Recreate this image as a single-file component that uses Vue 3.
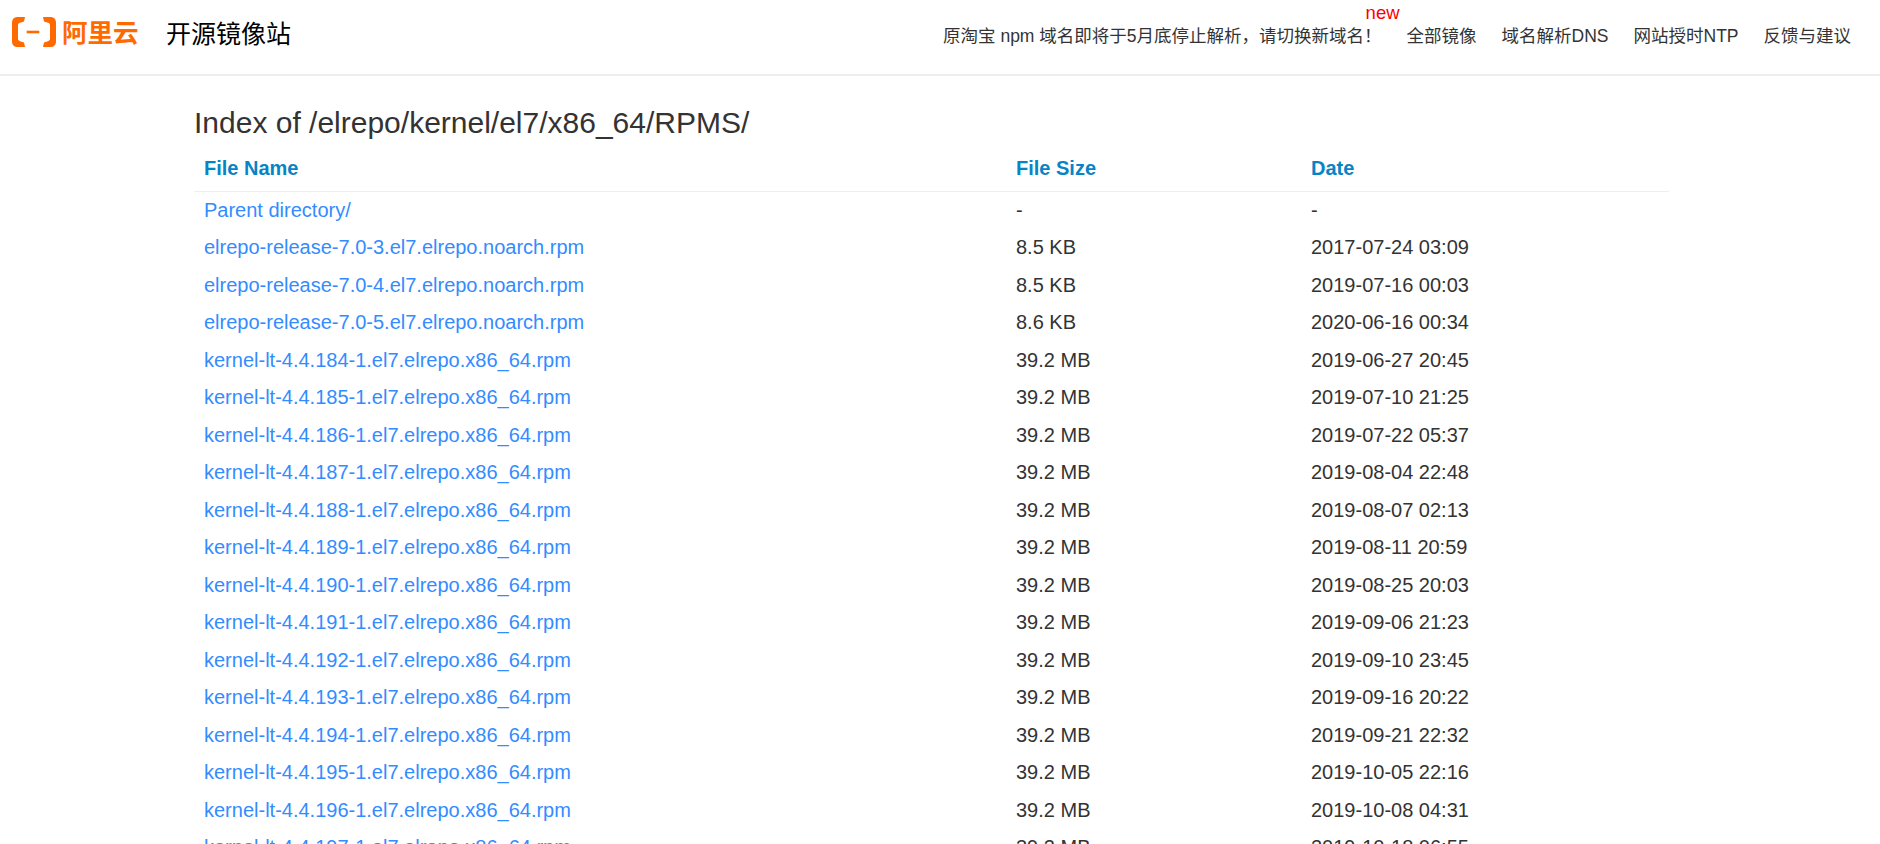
<script setup>
const navItems = ['全部镜像', '域名解析DNS', '网站授时NTP', '反馈与建议']
const rows = [
  ['Parent directory/', '-', '-'],
  ['elrepo-release-7.0-3.el7.elrepo.noarch.rpm', '8.5 KB', '2017-07-24 03:09'],
  ['elrepo-release-7.0-4.el7.elrepo.noarch.rpm', '8.5 KB', '2019-07-16 00:03'],
  ['elrepo-release-7.0-5.el7.elrepo.noarch.rpm', '8.6 KB', '2020-06-16 00:34'],
  ['kernel-lt-4.4.184-1.el7.elrepo.x86_64.rpm', '39.2 MB', '2019-06-27 20:45'],
  ['kernel-lt-4.4.185-1.el7.elrepo.x86_64.rpm', '39.2 MB', '2019-07-10 21:25'],
  ['kernel-lt-4.4.186-1.el7.elrepo.x86_64.rpm', '39.2 MB', '2019-07-22 05:37'],
  ['kernel-lt-4.4.187-1.el7.elrepo.x86_64.rpm', '39.2 MB', '2019-08-04 22:48'],
  ['kernel-lt-4.4.188-1.el7.elrepo.x86_64.rpm', '39.2 MB', '2019-08-07 02:13'],
  ['kernel-lt-4.4.189-1.el7.elrepo.x86_64.rpm', '39.2 MB', '2019-08-11 20:59'],
  ['kernel-lt-4.4.190-1.el7.elrepo.x86_64.rpm', '39.2 MB', '2019-08-25 20:03'],
  ['kernel-lt-4.4.191-1.el7.elrepo.x86_64.rpm', '39.2 MB', '2019-09-06 21:23'],
  ['kernel-lt-4.4.192-1.el7.elrepo.x86_64.rpm', '39.2 MB', '2019-09-10 23:45'],
  ['kernel-lt-4.4.193-1.el7.elrepo.x86_64.rpm', '39.2 MB', '2019-09-16 20:22'],
  ['kernel-lt-4.4.194-1.el7.elrepo.x86_64.rpm', '39.2 MB', '2019-09-21 22:32'],
  ['kernel-lt-4.4.195-1.el7.elrepo.x86_64.rpm', '39.2 MB', '2019-10-05 22:16'],
  ['kernel-lt-4.4.196-1.el7.elrepo.x86_64.rpm', '39.2 MB', '2019-10-08 04:31'],
  ['kernel-lt-4.4.197-1.el7.elrepo.x86_64.rpm', '39.2 MB', '2019-10-18 06:55']
]
</script>

<template>
  <div class="page">
    <header class="topbar">
      <div class="brand">
        <svg class="logo-mark" viewBox="0 0 44 30" width="44" height="30" aria-hidden="true">
          <path d="M13 0H6C2 0 0 2 0 6V24C0 28 2 30 6 30H13L12 25.500L8 24.200C7 23.900 6 23 6 22V8C6 7 7 6.100 8 5.800L12 4.500Z" fill="#ff6a00"/>
          <path d="M31 0H38C42 0 44 2 44 6V24C44 28 42 30 38 30H31L32 25.500L36 24.200C37 23.900 38 23 38 22V8C38 7 37 6.100 36 5.800L32 4.500Z" fill="#ff6a00"/>
          <rect x="14.700" y="13.700" width="12.600" height="2.600" fill="#ff6a00"/>
        </svg>
        <span class="logo-text">阿里云</span>
        <span class="site-title">开源镜像站</span>
      </div>
      <nav class="nav">
        <a class="nav-item notice">原淘宝 npm 域名即将于5月底停止解析，请切换新域名！<span class="new">new</span></a>
        <a v-for="item in navItems" :key="item" class="nav-item">{{ item }}</a>
      </nav>
    </header>
    <main class="content">
      <h1 class="title">Index of /elrepo/kernel/el7/x86_64/RPMS/</h1>
      <table class="files">
        <thead>
          <tr><th class="c1">File Name</th><th class="c2">File Size</th><th>Date</th></tr>
        </thead>
        <tbody>
          <tr v-for="r in rows" :key="r[0]">
            <td><a class="link">{{ r[0] }}</a></td>
            <td>{{ r[1] }}</td>
            <td>{{ r[2] }}</td>
          </tr>
        </tbody>
      </table>
    </main>
  </div>
</template>

<style>
html, body { margin: 0; height: 100%; overflow: hidden; background: #fff; }
</style>

<style scoped>
.page {
  font-family: "Liberation Sans", "Noto Sans CJK SC", sans-serif;
  color: #333;
  height: 844px;
  overflow: hidden;
}
.topbar {
  height: 74px;
  border-bottom: 2px solid #eee;
  display: flex;
  justify-content: space-between;
  align-items: flex-start;
}
.brand { display: flex; align-items: center; height: 64px; padding-left: 12px; }
.logo-mark { display: block; }
.logo-text { color: #ff6a00; font-size: 25.500px; font-weight: 700; margin-left: 6px; line-height: 30px; padding-top: 2px; }
.site-title { color: #000; font-size: 25px; margin-left: 27.500px; }
.nav { display: flex; padding-right: 29px; height: 68px; align-items: center; }
.nav-item { font-size: 17.500px; color: #333; margin-left: 25px; position: relative; }
.new { position: absolute; right: -18px; top: -20px; color: #f00; font-size: 18.500px; line-height: 22px; }
.content { padding: 29px 211px 0 194px; }
.title { margin: 0 0 7.500px; font-size: 30px; font-weight: 400; line-height: 36px; color: #333; }
.files { width: 100%; border-collapse: collapse; font-size: 20px; table-layout: fixed; }
th { text-align: left; color: #0685c6; font-weight: 700; padding: 8px 10px 11px; font-size: 20px; border-bottom: 1px solid #eee; }
td { padding: 8px 10px; line-height: 21.500px; color: #333; }
.c1 { width: 792px; }
.c2 { width: 275px; }
.link { color: #338cff; }
</style>
